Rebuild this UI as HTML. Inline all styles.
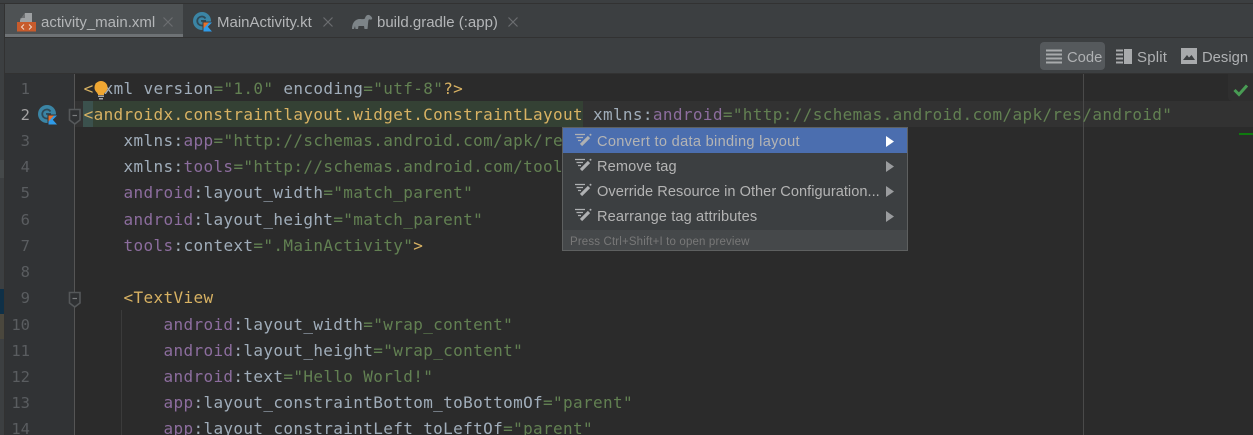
<!DOCTYPE html>
<html><head><meta charset="utf-8">
<style>
html,body{margin:0;padding:0;background:#2b2b2b}
#r{position:relative;width:1253px;height:435px;overflow:hidden;background:#2b2b2b;font-family:"Liberation Sans",sans-serif}
.a{position:absolute}
.ui{position:absolute;font-size:15px;color:#afb1b3;white-space:nowrap;line-height:20px}
.l{position:absolute;left:83.6px;height:26px;line-height:26px;font-family:"DejaVu Sans Mono","Liberation Mono",monospace;font-size:16px;letter-spacing:.355px;color:#a0adba;white-space:pre}
.n{position:absolute;width:30px;left:0;text-align:right;height:26px;line-height:26px;font-family:"DejaVu Sans Mono",monospace;font-size:15.5px;color:#5a5d60}
.t{color:#d8b263}.p{color:#8c6d9e}.s{color:#628052}
.m{position:absolute;left:597px;font-size:14.6px;line-height:25px;height:25px;color:#b4b4b4;white-space:nowrap}
</style></head><body><div id="r">
<!-- top chrome -->
<div class="a" style="left:0;top:0;width:1253px;height:4px;background:#3c3f41"></div>
<div class="a" style="left:0;top:3px;width:1253px;height:1px;background:#323232"></div>
<div class="a" style="left:0;top:4px;width:1253px;height:34px;background:#3c3f41"></div>
<div class="a" style="left:0;top:37px;width:1253px;height:1px;background:#323232"></div>
<div class="a" style="left:0;top:38px;width:1253px;height:35px;background:#3c3f41"></div>
<div class="a" style="left:0;top:73px;width:1253px;height:1px;background:#323232"></div>
<!-- active tab -->
<div class="a" style="left:5px;top:4px;width:178px;height:30px;background:#4e5254"></div>
<div class="a" style="left:5px;top:34px;width:178px;height:3px;background:#6e7275"></div>
<!-- left strip -->
<div class="a" style="left:0;top:4px;width:5px;height:431px;background:#3c3f41"></div>
<div class="a" style="left:4px;top:4px;width:1px;height:431px;background:#323232"></div>
<div class="a" style="left:0;top:289px;width:4px;height:25px;background:#0f3047"></div>
<div class="a" style="left:0;top:314px;width:4px;height:25px;background:#4a473d"></div>
<div class="a" style="left:0;top:160px;width:4px;height:18px;background:#45494a"></div>
<!-- tab 1 icon -->
<svg class="a" style="left:17px;top:12px" width="20" height="20" viewBox="0 0 20 20">
<path d="M3 8 L8 1 H15 V10 H3Z" fill="#9da0a2"/><path d="M3 8 L8 1 V6 H3Z" fill="#6e7072"/>
<rect x="0" y="10" width="19" height="9.5" fill="#c75b2c"/>
<path d="M7 12.5 L4.5 15 L7 17.5 M12 12.5 L14.5 15 L12 17.5" fill="none" stroke="#f0d8c8" stroke-width="1"/>
</svg>
<div class="ui" style="left:41px;top:13px;color:#b4b6b8">activity_main.xml</div>
<svg class="a" style="left:162px;top:16px" width="12" height="12"><path d="M1.5 1.5L10.5 10.5M10.5 1.5L1.5 10.5" stroke="#6b6e70" stroke-width="1.2"/></svg>
<!-- tab 2 icon -->
<svg class="a" style="left:193px;top:12px" width="20" height="20" viewBox="0 0 20 20">
<circle cx="9" cy="9" r="9" fill="#3b85a5"/>
<path d="M12.5 6.5 A4.5 4.5 0 1 0 12.5 11.5" fill="none" stroke="#2e4a58" stroke-width="1.8"/><rect x="8" y="8" width="5" height="1.8" fill="#2e4a58"/>
<rect x="9.5" y="9.5" width="10" height="10" fill="#3c3f41"/>
<path d="M10.5 10.5H19L14.8 14.8L19 19.5H10.5Z" fill="#2f9be8"/><path d="M10.5 10.5H16L10.5 16.5Z" fill="#e8702a"/>
</svg>
<div class="ui" style="left:217px;top:13px;color:#b4b6b8">MainActivity.kt</div>
<svg class="a" style="left:322px;top:16px" width="12" height="12"><path d="M1.5 1.5L10.5 10.5M10.5 1.5L1.5 10.5" stroke="#6b6e70" stroke-width="1.2"/></svg>
<!-- tab 3 icon: gradle elephant -->
<svg class="a" style="left:352px;top:13px" width="21" height="18" viewBox="0 0 21 18">
<path d="M0 16 C0 10 3 6 8 6 C10.5 6 11.5 6.5 13 5.5 C13.5 2.5 16 1 18 2.5 C20 4 21 5.5 19.5 6.5 C18 7.2 17.5 5.5 16.5 7 C16 9 16 12 15.5 16 H12.5 L12 13 H6.5 L6 16 H3.5 L3 13 L2 16Z" fill="#7d8488"/>
</svg>
<div class="ui" style="left:377px;top:13px;color:#b4b6b8">build.gradle (:app)</div>
<svg class="a" style="left:507px;top:16px" width="12" height="12"><path d="M1.5 1.5L10.5 10.5M10.5 1.5L1.5 10.5" stroke="#6b6e70" stroke-width="1.2"/></svg>
<!-- Code Split Design -->
<div class="a" style="left:1040px;top:42px;width:65px;height:28px;background:#55595c;border-radius:4px"></div>
<svg class="a" style="left:1046px;top:49px" width="16" height="15"><path d="M0 1.5H16M0 5.5H16M0 9.5H16M0 13.5H16" stroke="#a8aaac" stroke-width="2"/></svg>
<div class="ui" style="left:1067px;top:48px;font-size:14.8px">Code</div>
<svg class="a" style="left:1116px;top:49px" width="16" height="15"><path d="M0 1.5H7M0 5.5H7M0 9.5H7M0 13.5H7" stroke="#a8aaac" stroke-width="2"/><rect x="8" y="0" width="8" height="15" fill="#a8aaac"/></svg>
<div class="ui" style="left:1137px;top:48px;letter-spacing:.2px">Split</div>
<svg class="a" style="left:1181px;top:48px" width="16" height="16"><rect width="16" height="16" fill="#a8aaac"/><path d="M2 12 L6 7 L8 9.5 L10.5 7 L14 12Z" fill="#3c3f41"/></svg>
<div class="ui" style="left:1202px;top:48px;font-size:14.8px">Design</div>

<!-- editor -->
<div class="a" style="left:5px;top:74px;width:70px;height:361px;background:#313335"></div>
<div class="a" style="left:74px;top:74px;width:1px;height:361px;background:#555555"></div>
<div class="a" style="left:75px;top:101px;width:1178px;height:26px;background:#323232"></div>
<div class="a" style="left:93px;top:101px;width:490px;height:26px;background:#344134"></div>
<div class="a" style="left:83px;top:101px;width:10px;height:26px;background:#3b514d"></div>
<div class="a" style="left:1083px;top:74px;width:1px;height:361px;background:#4a4a4a"></div>
<div class="a" style="left:121px;top:310px;width:1px;height:125px;background:#3b3b3b"></div>
<div class="a" style="left:1228px;top:74px;width:25px;height:27px;background:#2f2f2f;border-radius:0 0 0 4px"></div>
<svg class="a" style="left:1233px;top:83px" width="16" height="14"><path d="M1.5 7L6 11.5L14 2.5" fill="none" stroke="#499c54" stroke-width="3"/></svg>
<div class="a" style="left:1239px;top:133px;width:14px;height:2px;background:#0e7a0e"></div>

<div class="n" style="top:76px">1</div><div class="n" style="top:102px;color:#a4a3a3">2</div><div class="n" style="top:128px">3</div><div class="n" style="top:154px">4</div><div class="n" style="top:180px">5</div><div class="n" style="top:207px">6</div><div class="n" style="top:233px">7</div><div class="n" style="top:259px">8</div><div class="n" style="top:285px">9</div><div class="n" style="top:312px">10</div><div class="n" style="top:338px">11</div><div class="n" style="top:364px">12</div><div class="n" style="top:390px">13</div><div class="n" style="top:416px">14</div>

<!-- gutter icons -->
<svg class="a" style="left:38px;top:105px" width="20" height="20" viewBox="0 0 20 20">
<circle cx="9" cy="9" r="9" fill="#3b85a5"/>
<path d="M12.5 6.5 A4.5 4.5 0 1 0 12.5 11.5" fill="none" stroke="#2e4a58" stroke-width="1.8"/><rect x="8" y="8" width="5" height="1.8" fill="#2e4a58"/>
<rect x="9.5" y="9.5" width="10" height="10" fill="#313335"/>
<path d="M10.5 10.5H19L14.8 14.8L19 19.5H10.5Z" fill="#2f9be8"/><path d="M10.5 10.5H16L10.5 16.5Z" fill="#e8702a"/>
</svg>
<svg class="a" style="left:68px;top:108px" width="14" height="18" viewBox="0 0 14 18"><path d="M1.5 1.5H12V12L6.75 16L1.5 12Z" fill="#2f3133" stroke="#55585a" stroke-width="1.6"/><path d="M4.5 7.5H9" stroke="#7a7c7e" stroke-width="1.2"/></svg>
<svg class="a" style="left:68px;top:291px" width="14" height="18" viewBox="0 0 14 18"><path d="M1.5 1.5H12V12L6.75 16L1.5 12Z" fill="#2f3133" stroke="#55585a" stroke-width="1.6"/><path d="M4.5 7.5H9" stroke="#7a7c7e" stroke-width="1.2"/></svg>

<!-- code -->
<div class="l" style="top:76px"><span class="t">&lt;?</span>xml version<span class="s">="1.0"</span> encoding<span class="s">="utf-8"</span><span class="t">?&gt;</span></div>
<div class="l" style="top:102px"><span class="t">&lt;androidx.constraintlayout.widget.ConstraintLayout</span> xmlns:<span class="p">android</span><span class="s">="http://schemas.android.com/apk/res/android"</span></div>
<div class="l" style="top:128px">    xmlns:<span class="p">app</span><span class="s">="http://schemas.android.com/apk/res-auto"</span></div>
<div class="l" style="top:154px">    xmlns:<span class="p">tools</span><span class="s">="http://schemas.android.com/tools"</span></div>
<div class="l" style="top:180px">    <span class="p">android</span>:layout_width<span class="s">="match_parent"</span></div>
<div class="l" style="top:207px">    <span class="p">android</span>:layout_height<span class="s">="match_parent"</span></div>
<div class="l" style="top:233px">    <span class="p">tools</span>:context<span class="s">=".MainActivity"</span><span class="t">&gt;</span></div>
<div class="l" style="top:285px">    <span class="t">&lt;TextView</span></div>
<div class="l" style="top:312px">        <span class="p">android</span>:layout_width<span class="s">="wrap_content"</span></div>
<div class="l" style="top:338px">        <span class="p">android</span>:layout_height<span class="s">="wrap_content"</span></div>
<div class="l" style="top:364px">        <span class="p">android</span>:text<span class="s">="Hello World!"</span></div>
<div class="l" style="top:390px">        <span class="p">app</span>:layout_constraintBottom_toBottomOf<span class="s">="parent"</span></div>
<div class="l" style="top:416px">        <span class="p">app</span>:layout_constraintLeft_toLeftOf<span class="s">="parent"</span></div>

<!-- bulb -->
<svg class="a" style="left:94px;top:81px" width="15" height="20" viewBox="0 0 15 20"><circle cx="7" cy="6.5" r="6.5" fill="#f0a732"/><rect x="4" y="12" width="6" height="2" fill="#f0a732"/><rect x="4" y="14.5" width="6" height="1.5" fill="#a9a9a9"/><rect x="5" y="17" width="4" height="1.5" fill="#a9a9a9"/></svg>

<!-- popup -->
<div class="a" style="left:562px;top:127px;width:344px;height:122px;background:#3c3f41;border:1px solid #5e6060"></div>
<div class="a" style="left:563px;top:128px;width:344px;height:25px;background:#4b6eaf"></div>
<div class="a" style="left:563px;top:230px;width:344px;height:20px;background:#45484a"></div>
<div class="m" style="top:130px;letter-spacing:.3px">Convert to data binding layout</div>
<div class="m" style="top:155px;letter-spacing:.1px">Remove tag</div>
<div class="m" style="top:180px;letter-spacing:.03px">Override Resource in Other Configuration...</div>
<div class="m" style="top:205px;letter-spacing:.12px">Rearrange tag attributes</div>
<div class="a" style="left:570px;top:235px;font-size:11.5px;line-height:15px;letter-spacing:.15px;color:#787878;white-space:nowrap">Press Ctrl+Shift+I to open preview</div>
<svg class="a" style="left:575px;top:133px" width="18" height="14" viewBox="0 0 18 14"><path d="M0 1.5H10M1.5 4.5H8M3 7.5H6" stroke="#afb1b3" stroke-width="1.3"/><path d="M6 12L14 4" stroke="#afb1b3" stroke-width="3.2"/><circle cx="15.5" cy="1.8" r="1" fill="#afb1b3"/></svg>
<svg class="a" style="left:575px;top:158px" width="18" height="14" viewBox="0 0 18 14"><path d="M0 1.5H10M1.5 4.5H8M3 7.5H6" stroke="#afb1b3" stroke-width="1.3"/><path d="M6 12L14 4" stroke="#afb1b3" stroke-width="3.2"/><circle cx="15.5" cy="1.8" r="1" fill="#afb1b3"/></svg>
<svg class="a" style="left:575px;top:183px" width="18" height="14" viewBox="0 0 18 14"><path d="M0 1.5H10M1.5 4.5H8M3 7.5H6" stroke="#afb1b3" stroke-width="1.3"/><path d="M6 12L14 4" stroke="#afb1b3" stroke-width="3.2"/><circle cx="15.5" cy="1.8" r="1" fill="#afb1b3"/></svg>
<svg class="a" style="left:575px;top:208px" width="18" height="14" viewBox="0 0 18 14"><path d="M0 1.5H10M1.5 4.5H8M3 7.5H6" stroke="#afb1b3" stroke-width="1.3"/><path d="M6 12L14 4" stroke="#afb1b3" stroke-width="3.2"/><circle cx="15.5" cy="1.8" r="1" fill="#afb1b3"/></svg>
<svg class="a" style="left:886px;top:136px" width="9" height="11"><path d="M0 0L8 5.5L0 11Z" fill="#ffffff"/></svg>
<svg class="a" style="left:886px;top:161px" width="9" height="11"><path d="M0 0L8 5.5L0 11Z" fill="#9a9c9e"/></svg>
<svg class="a" style="left:886px;top:186px" width="9" height="11"><path d="M0 0L8 5.5L0 11Z" fill="#9a9c9e"/></svg>
<svg class="a" style="left:886px;top:211px" width="9" height="11"><path d="M0 0L8 5.5L0 11Z" fill="#9a9c9e"/></svg>
</div></body></html>
